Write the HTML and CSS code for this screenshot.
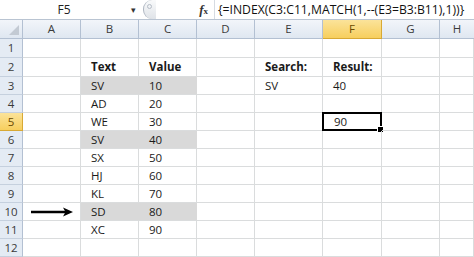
FILE: index.html
```html
<!DOCTYPE html>
<html lang="en">
<head>
    <meta charset="UTF-8">
    <title>Excel - INDEX MATCH</title>
    <link rel="stylesheet" href="styles.css">
</head>
<body>

<!-- Строка формул -->
<div class="formula-bar">
    <div class="name-box">F5</div>
    <div class="name-drop">&#9662;</div>
    <div class="splitter"><span class="dot"></span></div>
    <div class="fx"><i>f</i><span>x</span></div>
    <div class="formula">{=INDEX(C3:C11,MATCH(1,--(E3=B3:B11),1))}</div>
</div>

<!-- Лист -->
<div class="sheet">
    <div class="hd corner"><span class="tri"></span></div>
    <div class="hd">A</div>
    <div class="hd">B</div>
    <div class="hd">C</div>
    <div class="hd">D</div>
    <div class="hd">E</div>
    <div class="hd sel">F</div>
    <div class="hd">G</div>
    <div class="hd last">H</div>

    <div class="rn">1</div>
    <div class="c"></div><div class="c"></div><div class="c"></div><div class="c"></div><div class="c"></div><div class="c"></div><div class="c"></div><div class="c"></div>

    <div class="rn">2</div>
    <div class="c"></div><div class="c b">Text</div><div class="c b">Value</div><div class="c"></div><div class="c b">Search:</div><div class="c b">Result:</div><div class="c"></div><div class="c"></div>

    <div class="rn">3</div>
    <div class="c"></div><div class="c gray">SV</div><div class="c gray">10</div><div class="c"></div><div class="c">SV</div><div class="c">40</div><div class="c"></div><div class="c"></div>

    <div class="rn">4</div>
    <div class="c"></div><div class="c">AD</div><div class="c">20</div><div class="c"></div><div class="c"></div><div class="c"></div><div class="c"></div><div class="c"></div>

    <div class="rn sel">5</div>
    <div class="c"></div><div class="c">WE</div><div class="c">30</div><div class="c"></div><div class="c"></div><div class="c active">90<span class="handle"></span></div><div class="c"></div><div class="c"></div>

    <div class="rn">6</div>
    <div class="c"></div><div class="c gray">SV</div><div class="c gray">40</div><div class="c"></div><div class="c"></div><div class="c"></div><div class="c"></div><div class="c"></div>

    <div class="rn">7</div>
    <div class="c"></div><div class="c">SX</div><div class="c">50</div><div class="c"></div><div class="c"></div><div class="c"></div><div class="c"></div><div class="c"></div>

    <div class="rn">8</div>
    <div class="c"></div><div class="c">HJ</div><div class="c">60</div><div class="c"></div><div class="c"></div><div class="c"></div><div class="c"></div><div class="c"></div>

    <div class="rn">9</div>
    <div class="c"></div><div class="c">KL</div><div class="c">70</div><div class="c"></div><div class="c"></div><div class="c"></div><div class="c"></div><div class="c"></div>

    <div class="rn">10</div>
    <div class="c arrow-cell">
        <svg class="arrow" width="44" height="10" viewBox="0 0 44 10">
            <path d="M1 5 H36" stroke="#000" stroke-width="2.4" fill="none"/>
            <path d="M33 0.5 L43 5 L33 9.5 L35.5 5 Z" fill="#000"/>
        </svg>
    </div><div class="c gray">SD</div><div class="c gray">80</div><div class="c"></div><div class="c"></div><div class="c"></div><div class="c"></div><div class="c"></div>

    <div class="rn">11</div>
    <div class="c"></div><div class="c">XC</div><div class="c">90</div><div class="c"></div><div class="c"></div><div class="c"></div><div class="c"></div><div class="c"></div>

    <div class="rn">12</div>
    <div class="c"></div><div class="c"></div><div class="c"></div><div class="c"></div><div class="c"></div><div class="c"></div><div class="c"></div><div class="c"></div>
</div>

</body>
</html>
```

FILE: styles.css
```css
body {
    margin: 0;
    width: 474px;
    height: 257px;
    overflow: hidden;
    background: #fff;
    font-family: "Open Sans", "Liberation Sans", sans-serif;
    font-size: 11.5px;
    color: #1a1a1a;
}

/* строка формул */
.formula-bar {
    display: flex;
    align-items: center;
    height: 20px;
    box-sizing: border-box;
    border-bottom: 1px solid #b9c4d2;
    background: #fff;
}

.name-box {
    width: 128px;
    text-align: center;
    font-size: 12px;
    color: #222;
}

.name-drop {
    width: 15px;
    padding-left: 3px;
    box-sizing: border-box;
    font-size: 9px;
    color: #333;
}

.splitter {
    position: relative;
    width: 13px;
    height: 19px;
    border-radius: 9px 0 0 9px;
    border-left: 1px solid #aeb6c1;
    background: linear-gradient(#f9fafb, #dfe3e8);
    box-sizing: border-box;
}

.splitter .dot {
    position: absolute;
    left: 3px;
    top: 4px;
    width: 5px;
    height: 5px;
    border: 1px solid #b5bcc6;
    border-radius: 50%;
    box-sizing: border-box;
}

.fx {
    width: 59px;
    text-align: right;
    padding-right: 6px;
    box-sizing: border-box;
    border-right: 1px solid #d6dbe2;
    height: 19px;
    line-height: 19px;
    font-family: "Liberation Serif", serif;
    font-size: 13px;
    font-weight: bold;
    color: #333;
}

.fx span {
    font-size: 9px;
}

.formula {
    padding-left: 3px;
    font-size: 12.2px;
    color: #111;
    white-space: nowrap;
}

/* лист */
.sheet {
    display: grid;
    grid-template-columns: 23px 58px 58px 58px 58px 68px 59px 58px 34px;
    grid-template-rows: 19px 19px 19px 18px 18px 18px 18px 18px 18px 18px 18px 18px 18px;
}

.hd,
.rn {
    box-sizing: border-box;
    background: linear-gradient(#f2f5fa, #dfe7f1);
    border-right: 1px solid #b3c0d2;
    border-bottom: 1px solid #b3c0d2;
    color: #3a3a3a;
    text-align: center;
    line-height: 18px;
    font-size: 11.5px;
}

.hd.last {
    border-right: none;
}

.rn {
    background: #e4ebf4;
    border-bottom: 1px solid #c5d0de;
    line-height: 17px;
}

.hd.sel,
.rn.sel {
    background: linear-gradient(#fbe39a, #f7cf5e);
    color: #6b4a00;
    border-color: #d8a934;
}

.corner {
    position: relative;
}

.tri {
    position: absolute;
    right: 3px;
    bottom: 3px;
    width: 0;
    height: 0;
    border-left: 10px solid transparent;
    border-bottom: 10px solid #c3cad3;
}

.c {
    position: relative;
    box-sizing: border-box;
    border-right: 1px solid #dadcdd;
    border-bottom: 1px solid #dadcdd;
    padding-left: 10px;
    line-height: 17px;
    white-space: nowrap;
}

.c.b {
    font-weight: bold;
}

.c.gray {
    background: #d9d9d9;
    border-color: #d9d9d9;
    border-bottom-color: #dadcdd;
}

.active {
    border: 2px solid #000;
    margin: -1px 0 0 -1px;
    line-height: 15px;
    padding-left: 10px;
}

.handle {
    position: absolute;
    right: -4px;
    bottom: -4px;
    width: 5px;
    height: 5px;
    background: #000;
    border: 1px solid #fff;
}

.arrow-cell {
    padding-left: 0;
}

.arrow {
    position: absolute;
    left: 7px;
    top: 4px;
}
```
